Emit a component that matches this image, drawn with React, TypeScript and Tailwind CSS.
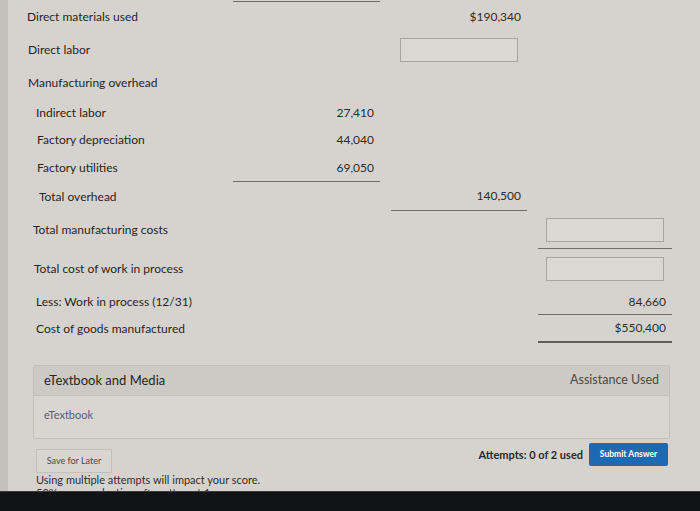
const font = { fontFamily: "Lato, 'Open Sans', sans-serif" }

type Cell = { text?: string; input?: boolean; line?: "b" | "bb" | "t" }

function Value({ cell }: { cell?: Cell }) {
  if (!cell) return <div />
  const border =
    cell.line === "b"
      ? "border-b border-[#6f6d6a]"
      : cell.line === "bb"
        ? "border-b-2 border-[#5f5d5a]"
        : cell.line === "t"
          ? "border-t border-[#6f6d6a]"
          : ""
  return (
    <div className={`flex h-full items-center justify-end ${border}`}>
      {cell.input ? (
        <div className="mx-auto h-[24px] w-[118px] border border-[#a8a5a0] bg-[#dbd8d3]" />
      ) : (
        <span className="pr-[6px] text-[12px] text-[#2d2c2a]">{cell.text}</span>
      )}
    </div>
  )
}

function Row({
  label,
  indent,
  h,
  c1,
  c2,
  c3,
}: {
  label: string
  indent: string
  h: string
  c1?: Cell
  c2?: Cell
  c3?: Cell
}) {
  return (
    <div className={`grid grid-cols-[214px_147px_136px_134px] gap-x-[11px] ${h}`}>
      <div className={`flex items-center whitespace-nowrap text-[12px] text-[#262523] ${indent}`}>{label}</div>
      <Value cell={c1} />
      <Value cell={c2} />
      <Value cell={c3} />
    </div>
  )
}

export default function App() {
  return (
    <div className="relative h-[511px] w-[700px] overflow-hidden bg-[#d6d3ce]" style={font}>
      <div className="flex h-[491px] overflow-hidden border-l-[8px] border-[#c4c1bc]">
        <div className="flex-1 pt-[1px]">
          <Row label="Direct materials used" indent="pl-[19px]" h="h-[32px]" c1={{ line: "t" }} c2={{ text: "$190,340" }} />
          <Row label="Direct labor" indent="pl-[20px]" h="h-[34px]" c2={{ input: true }} />
          <Row label="Manufacturing overhead" indent="pl-[20px]" h="h-[32px]" />
          <Row label="Indirect labor" indent="pl-[28px]" h="h-[27px]" c1={{ text: "27,410" }} />
          <Row label="Factory depreciation" indent="pl-[29px]" h="h-[28px]" c1={{ text: "44,040" }} />
          <Row label="Factory utilities" indent="pl-[29px]" h="h-[28px]" c1={{ text: "69,050", line: "b" }} />
          <Row label="Total overhead" indent="pl-[31px]" h="h-[29px]" c2={{ text: "140,500", line: "b" }} />
          <Row label="Total manufacturing costs" indent="pl-[25px]" h="h-[38px]" c3={{ input: true, line: "b" }} />
          <Row label="Total cost of work in process" indent="pl-[26px]" h="h-[40px]" c3={{ input: true }} />
          <Row label="Less: Work in process (12/31)" indent="pl-[28px]" h="h-[26px]" c3={{ text: "84,660", line: "b" }} />
          <Row label="Cost of goods manufactured" indent="pl-[28px]" h="h-[28px]" c3={{ text: "$550,400", line: "bb" }} />

          <div className="ml-[25px] mt-[22px] w-[637px] overflow-hidden rounded-[2px] border border-[#c3c0bb]">
            <div className="flex h-[30px] items-center justify-between border-b border-[#c3c0bb] bg-[#cdcac5] px-[10px]">
              <span className="text-[13px] text-[#262523]">eTextbook and Media</span>
              <span className="text-[12.5px] text-[#4a4946]">Assistance Used</span>
            </div>
            <div className="h-[42px] bg-[#d9d6d1] px-[10px] pt-[11px] text-[11px] text-[#4f5f78]">eTextbook</div>
          </div>

          <div className="ml-[28px] mt-[4px] flex w-[632px] items-start justify-between">
            <div>
              <div className="mt-[6px] flex h-[24px] w-[76px] items-center justify-center border border-[#c3c0bb] bg-[#d9d6d1] text-[9px] text-[#4a4946]">
                Save for Later
              </div>
              <div className="text-[11px] leading-[14px] text-[#2f2e2c]">Using multiple attempts will impact your score.</div>
              <div className="text-[11px] leading-[11px] text-[#2f2e2c]">50% score reduction after attempt 1</div>
            </div>
            <div className="flex items-center gap-[6px]">
              <span className="mt-[2px] text-[11px] font-bold text-[#2a2927]">Attempts: 0 of 2 used</span>
              <div className="flex h-[23px] w-[79px] items-center justify-center rounded-[2px] bg-[#1d69b3] text-[8.5px] font-bold text-white">
                Submit Answer
              </div>
            </div>
          </div>
        </div>
      </div>
      <div className="h-[20px] border-t border-[#3a3a3c] bg-[#121316]" />
    </div>
  )
}
